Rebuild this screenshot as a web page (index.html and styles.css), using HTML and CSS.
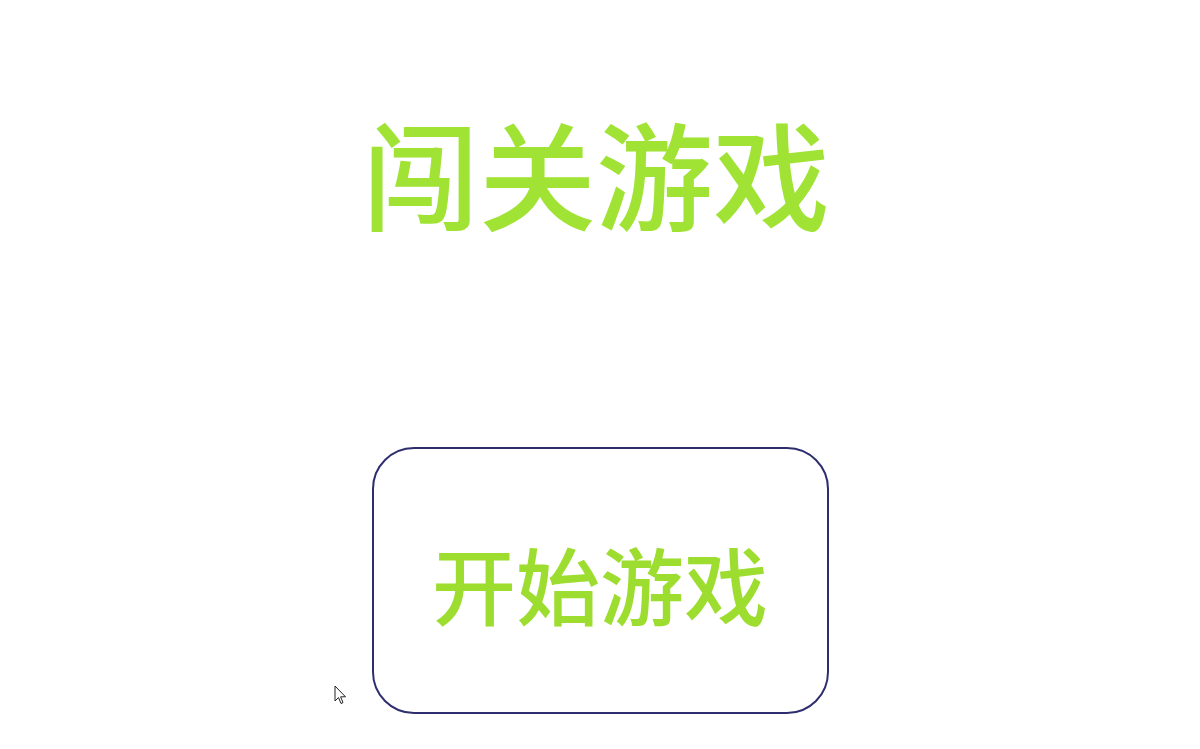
FILE: index.html
```html
<!DOCTYPE html>
<html lang="zh-CN">
<head>
    <meta charset="UTF-8">
    <meta name="viewport" content="width=device-width, initial-scale=1.0">
    <title>闯关游戏</title>
    <link rel="stylesheet" href="styles.css">
</head>
<body>

    <div class="page">
        <h1 class="title">闯关游戏</h1>

        <button class="start-btn" id="start-btn">开始游戏</button>
    </div>

    <!-- mouse pointer visible in the capture -->
    <svg class="pointer" width="14" height="21" viewBox="0 0 14 21">
        <path d="M1 1 L1 16 L4.5 12.5 L7 18.5 L9 17.6 L6.6 11.8 L11.5 11.8 Z" fill="#fff" stroke="#222" stroke-width="1" stroke-linejoin="round"/>
    </svg>

</body>
</html>
```

FILE: styles.css
```css
body {
    font-family: "Noto Sans CJK SC", "Noto Sans", sans-serif;
    margin: 0;
    background-color: #ffffff;
    height: 749px;
    overflow: hidden;
    position: relative;
}
.page {
    display: flex;
    flex-direction: column;
    align-items: center;
}
.title {
    margin: 101px 8px 0 0;
    font-size: 117px;
    line-height: 140px;
    font-weight: 500;
    color: #a0e335;
}
.start-btn {
    margin-top: 206px;
    width: 457px;
    height: 267px;
    background-color: #ffffff;
    border: 2px solid #2e2e6e;
    border-radius: 42px;
    font-family: "Noto Sans CJK SC", "Noto Sans", sans-serif;
    font-size: 84px;
    font-weight: 500;
    color: #9ddd2f;
    line-height: 1;
    padding: 4px 0 0 0;
    cursor: pointer;
}
.pointer {
    position: absolute;
    left: 334px;
    top: 685px;
}
```
